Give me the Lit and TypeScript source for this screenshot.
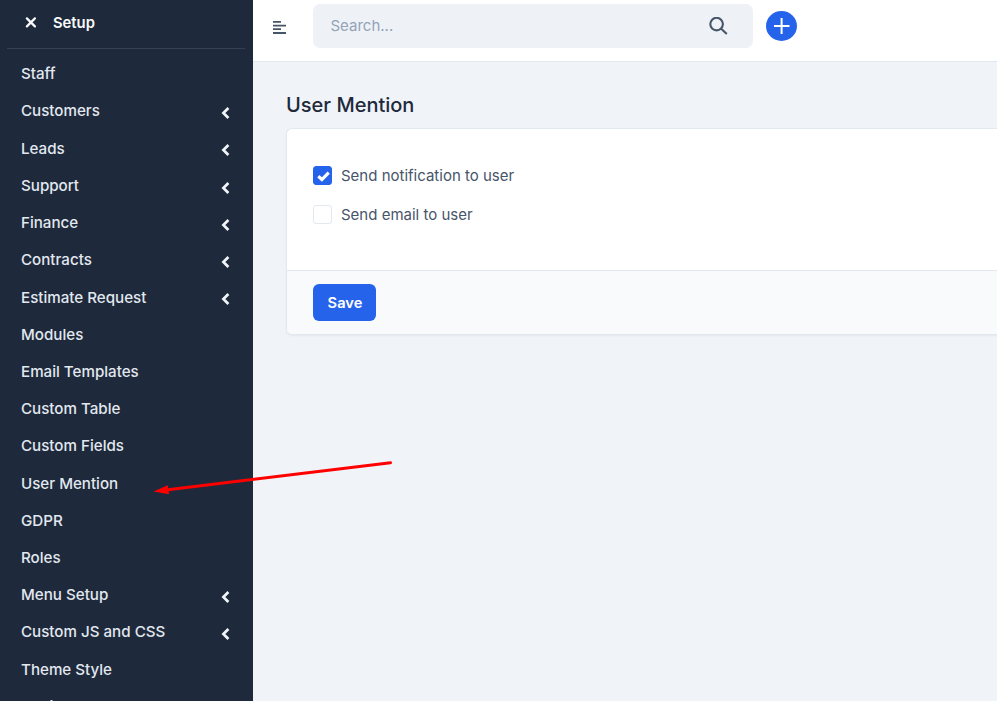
import { LitElement, html, css, nothing } from "lit";
import { customElement } from "lit/decorators.js";

interface MenuItem {
  label: string;
  expandable?: boolean;
}

const MENU: MenuItem[] = [
  { label: "Staff" },
  { label: "Customers", expandable: true },
  { label: "Leads", expandable: true },
  { label: "Support", expandable: true },
  { label: "Finance", expandable: true },
  { label: "Contracts", expandable: true },
  { label: "Estimate Request", expandable: true },
  { label: "Modules" },
  { label: "Email Templates" },
  { label: "Custom Table" },
  { label: "Custom Fields" },
  { label: "User Mention" },
  { label: "GDPR" },
  { label: "Roles" },
  { label: "Menu Setup", expandable: true },
  { label: "Custom JS and CSS", expandable: true },
  { label: "Theme Style" },
  { label: "Settings" },
];

@customElement("setup-menu")
class SetupMenu extends LitElement {
  static styles = css`
    :host { display: block; width: 253px; flex: none; background: #1e293b; color: #e2e8f0; overflow: hidden; }
    .head { display: flex; align-items: center; height: 49px; margin: 0 8px 0 7px; padding: 0 0 3px 18px; box-sizing: border-box; border-bottom: 1px solid #334155; color: #f8fafc; }
    .title { margin-left: 17px; font-size: 14.8px; line-height: 20px; padding-top: 1px; font-weight: 600; }
    ul { list-style: none; margin: 0; padding: 6.58px 0 0; }
    li { display: flex; align-items: center; justify-content: space-between; height: 37.22px; padding: 0 23px 0 21px; font-size: 15.15px; line-height: 20px; font-weight: 500; white-space: nowrap; }
    svg { display: block; flex: none; }
    .chevron { margin-top: 3.4px; }
  `;
  render() {
    return html`
      <div class="head">
        <svg width="11" height="11" viewBox="0 0 11 11" fill="none" stroke="currentColor" stroke-width="2.2" stroke-linecap="round"><path d="M1.9 1.4L9.9 9.4M9.9 1.4L1.9 9.4" /></svg>
        <span class="title">Setup</span>
      </div>
      <ul>
        ${MENU.map((m) => html`<li><span>${m.label}</span>${m.expandable
          ? html`<svg class="chevron" width="9" height="12" viewBox="0 0 9 12" fill="none" stroke="#f1f5f9" stroke-width="2.7"><path d="M7.4 1L2.4 6L7.4 11" /></svg>`
          : nothing}</li>`)}
      </ul>
    `;
  }
}

@customElement("top-bar")
class TopBar extends LitElement {
  static styles = css`
    :host { display: flex; height: 62px; box-sizing: border-box; background: #fff; border-bottom: 1px solid #e2e8f0; padding: 4px 0 0 20px; }
    svg { display: block; flex: none; }
    .toggle { margin-top: 17px; }
    .search { display: flex; align-items: center; justify-content: space-between; width: 440px; height: 44px; box-sizing: border-box; margin-left: 26px; padding: 0 25px 0 17.5px; border-radius: 7px; background: #eef2f7; color: #94a3b8; font-size: 15px; }
    .query { padding-bottom: 1px; }
    .add { display: flex; align-items: center; justify-content: center; width: 31px; height: 30px; margin: 7px 0 0 13px; border-radius: 50%; background: #2563eb; }
  `;
  render() {
    return html`
      <svg class="toggle" width="14" height="13" viewBox="0 0 14 13" fill="#475569"><path d="M0 0h8v1.7H0zM0 3.7h13v1.7H0zM0 7.3h8V9H0zM0 11h13v2H0z" /></svg>
      <div class="search">
        <span class="query">Search...</span>
        <svg width="19" height="19" viewBox="0 0 19 19" fill="none" stroke="#475569" stroke-width="2.1"><circle cx="7.6" cy="7.1" r="6.3" /><path d="M12.2 11.7L17.8 17.1" /></svg>
      </div>
      <div class="add">
        <svg width="16" height="16" viewBox="0 0 16 16" stroke="#fff" stroke-width="2"><path d="M0 8H15.5M7.6 0V16" /></svg>
      </div>
    `;
  }
}

@customElement("check-option")
class CheckOption extends LitElement {
  static properties = { label: { type: String }, checked: { type: Boolean } };
  declare label: string;
  declare checked: boolean;
  static styles = css`
    :host { display: flex; align-items: center; height: 19px; color: #475569; font-size: 15px; }
    .box { display: flex; align-items: center; justify-content: center; width: 19px; height: 19px; box-sizing: border-box; border: 1px solid #e2e8f0; border-radius: 3px; background: #fff; margin-right: 9px; }
    .on { background: #2563eb; border-color: #2563eb; }
    svg { display: block; flex: none; margin: 1px 0 0 1px; }
  `;
  render() {
    return html`
      <span class="box ${this.checked ? "on" : ""}">${this.checked
        ? html`<svg width="13" height="11" viewBox="0 0 13 11" fill="none" stroke="#fff" stroke-width="3.2"><path d="M1.3 5.2L4.9 8.5L11.7 1.6" /></svg>`
        : nothing}</span>
      <span>${this.label}</span>
    `;
  }
}

@customElement("app-root")
class AppRoot extends LitElement {
  static styles = css`
    :host { display: flex; position: relative; width: 100%; height: 701px; overflow: hidden; background: #f0f3f8; font-family: Inter, "Liberation Sans", sans-serif; }
    main { flex: 1; min-width: 0; }
    .content { padding: 31px 0 0 33px; }
    h1 { margin: 0; font-size: 20px; line-height: 24px; font-weight: 500; color: #1e293b; }
    .panel { margin-top: 11px; border: 1px solid #e2e8f0; border-right: 0; border-radius: 6px 0 0 6px; background: #fff; overflow: hidden; box-shadow: 0 1px 2px rgba(0, 0, 0, 0.05); }
    .body { display: flex; flex-direction: column; gap: 20px; height: 141px; box-sizing: border-box; padding: 37px 26px 0; }
    .foot { height: 64px; box-sizing: border-box; padding: 13px 26px 0; border-top: 1px solid #e2e8f0; background: #f8fafc; }
    button { display: block; width: 63px; height: 37px; padding: 1px 0 0 1px; border: 0; border-radius: 6px; background: #2563eb; color: #fff; font: 600 14.7px Inter, "Liberation Sans", sans-serif; }
    .arrow { position: absolute; left: 150px; top: 455px; }
  `;
  render() {
    return html`
      <setup-menu></setup-menu>
      <main>
        <top-bar></top-bar>
        <div class="content">
          <h1>User Mention</h1>
          <div class="panel">
            <div class="body">
              <check-option label="Send notification to user" checked></check-option>
              <check-option label="Send email to user"></check-option>
            </div>
            <div class="foot"><button>Save</button></div>
          </div>
        </div>
      </main>
      <svg class="arrow" width="250" height="45" viewBox="150 455 250 45">
        <path d="M166 490L390.5 462.7" stroke="#f00" stroke-width="3" stroke-linecap="round" />
        <path d="M153.5 491.5L167.8 485.3L169 494.2Z" fill="#f00" />
      </svg>
    `;
  }
}
